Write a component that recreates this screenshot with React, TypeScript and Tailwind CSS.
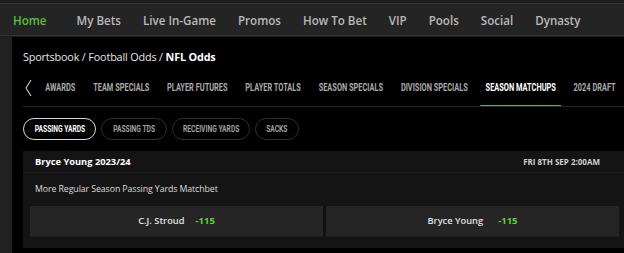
import React from "react";

const navItems = ["Home", "My Bets", "Live In-Game", "Promos", "How To Bet", "VIP", "Pools", "Social", "Dynasty"];
const tabs = ["AWARDS", "TEAM SPECIALS", "PLAYER FUTURES", "PLAYER TOTALS", "SEASON SPECIALS", "DIVISION SPECIALS", "SEASON MATCHUPS", "2024 DRAFT"];
const pills = [
  { label: "PASSING YARDS", w: "w-[73px]" },
  { label: "PASSING TDS", w: "w-[66px]" },
  { label: "RECEIVING YARDS", w: "w-[78px]" },
  { label: "SACKS", w: "w-[44px]" },
];

export default function App() {
  return (
    <div className="w-[624px] h-[253px] overflow-hidden bg-black flex flex-col font-['Open_Sans',sans-serif]">
      {/* Top nav */}
      <div className="h-[37px] shrink-0 bg-[#242424] flex flex-col">
        <div className="h-[3px] bg-[#1e1e1e]" />
        <div className="h-px bg-[#363636]" />
        <div className="flex-1 flex items-center pt-[2px] pl-[13px] gap-[22px] text-[11.6px] font-semibold text-[#b9b9b9] whitespace-nowrap">
          {navItems.map((n, i) => (
            <span key={n} className={i === 0 ? "shrink-0 text-[#5bbf3a] mr-[8px]" : "shrink-0"}>{n}</span>
          ))}
        </div>
        <div className="h-px bg-[#333]" />
        <div className="h-px bg-[#1a1a1a]" />
      </div>
      <div className="flex flex-1 min-h-0">
        <div className="w-[12px] shrink-0 bg-[#212121]" />
        <div className="flex-1 min-w-0 flex flex-col pl-[11px]">
          <div className="h-[37px] flex items-center pt-[3px] text-[10.8px] text-[#e6e6e6] tracking-[-0.15px]">
            <span>Sportsbook / Football Odds / <span className="font-bold text-white">NFL Odds</span></span>
          </div>
          {/* Tabs */}
          <div className="h-[33px] flex items-stretch overflow-hidden border-b border-[#262626] font-['Roboto',sans-serif] text-[10px] font-bold text-[#a9a9a9]">
            <div className="w-[17px] shrink-0 flex items-center pb-[4px]">
              <svg width="9" height="18" viewBox="0 0 9 18" className="ml-[1px]">
                <path d="M7 1 L2 9 L7 17" fill="none" stroke="#cfcfcf" strokeWidth="1.1" />
              </svg>
            </div>
            <div className="flex gap-[10px] origin-left scale-x-[0.74] shrink-0">
              {tabs.map((t) => {
                const active = t === "SEASON MATCHUPS";
                return (
                  <div key={t} className={`relative shrink-0 px-[7px] pb-[6px] flex items-center whitespace-nowrap ${active ? "text-white" : ""}`}>
                    {t}
                    {active && <div className="absolute left-0 right-0 bottom-[-1px] h-[2px] bg-[#54b848]" />}
                  </div>
                );
              })}
            </div>
          </div>
          {/* Pills */}
          <div className="h-[44px] flex items-center gap-[5px] font-['Roboto',sans-serif] text-[9.3px] font-bold">
            {pills.map((p, i) => (
              <div key={p.label} className={`${p.w} h-[22px] rounded-full flex items-center justify-center border whitespace-nowrap ${i === 0 ? "border-[#d8d8d8] text-white" : "border-[#2e2e2e] text-[#a0a0a0]"}`}>
                <span className="inline-block scale-x-[0.72]">{p.label}</span>
              </div>
            ))}
          </div>
          {/* Card */}
          <div className="h-[97px] bg-[#141414] flex flex-col">
            <div className="h-[22px] flex items-center justify-between pl-[12px] pr-[24px] border-b border-[#1d1d1d]">
              <span className="text-[9.3px] font-bold text-white">Bryce Young 2023/24</span>
              <span className="text-[8px] font-bold text-[#d0d0d0]">FRI 8TH SEP 2:00AM</span>
            </div>
            <div className="h-[33px] flex items-center pl-[12px] text-[8.8px] text-[#dcdcdc] tracking-[-0.1px]">
              More Regular Season Passing Yards Matchbet
            </div>
            <div className="h-[31px] ml-[7px] mr-[5px] flex gap-[3px] bg-[#111]">
              <div className="flex-1 bg-[#252525] flex items-center justify-center gap-[11px] border-b border-[#1c1c1c]">
                <span className="text-[9.3px] font-semibold text-[#e0e0e0]">C.J. Stroud</span>
                <span className="text-[9.5px] font-bold text-[#5fcf3d]">-115</span>
              </div>
              <div className="flex-1 bg-[#252525] flex items-center justify-center gap-[15px] border-b border-[#1c1c1c]">
                <span className="text-[9.3px] font-semibold text-[#e0e0e0]">Bryce Young</span>
                <span className="text-[9.5px] font-bold text-[#5fcf3d]">-115</span>
              </div>
            </div>
          </div>
        </div>
      </div>
    </div>
  );
}
